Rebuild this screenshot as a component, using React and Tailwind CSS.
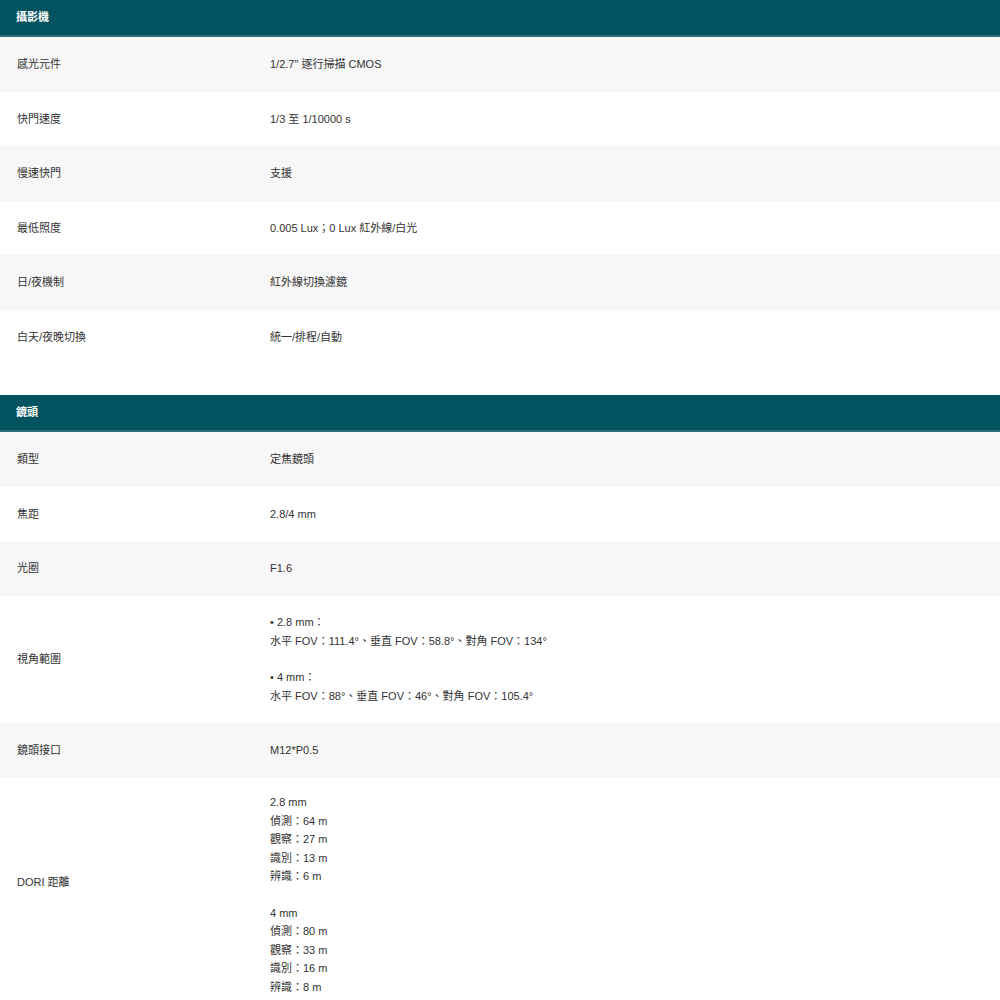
export default function App() {
  const font = { fontFamily: '"Liberation Sans", "Noto Sans CJK TC", sans-serif' };
  const Header = ({ t }) => (
    <div className="h-[37px] bg-[#03525f] flex items-center px-[16px] text-white font-bold text-[11px] border-b-2 border-[#2d6d78]">{t}</div>
  );
  const Row = ({ l, children, gray, h = 'h-[54.5px]' }) => (
    <div className={`flex items-center ${h} ${gray ? 'bg-[#f7f7f7]' : 'bg-white'}`}>
      <div className="w-[270px] pl-[17px] shrink-0">{l}</div>
      <div className="flex-1">{children}</div>
    </div>
  );
  return (
    <div style={font} className="w-[1000px] h-[1000px] overflow-hidden bg-white text-[11px] text-[#333] leading-[18.5px]">
      <Header t="攝影機" />
      <Row gray l="感光元件">1/2.7" 逐行掃描 CMOS</Row>
      <Row l="快門速度">1/3 至 1/10000 s</Row>
      <Row gray l="慢速快門">支援</Row>
      <Row l="最低照度">0.005 Lux；0 Lux 紅外線/白光</Row>
      <Row gray l="日/夜機制">紅外線切換濾鏡</Row>
      <Row l="白天/夜晚切換">統一/排程/自動</Row>
      <div className="h-[31px]" />
      <Header t="鏡頭" />
      <Row gray l="類型">定焦鏡頭</Row>
      <Row l="焦距">2.8/4 mm</Row>
      <Row gray l="光圈">F1.6</Row>
      <Row l="視角範圍" h="h-[127px]">
        <div>• 2.8 mm：</div>
        <div>水平 FOV：111.4°、垂直 FOV：58.8°、對角 FOV：134°</div>
        <div className="mt-[18px]">• 4 mm：</div>
        <div>水平 FOV：88°、垂直 FOV：46°、對角 FOV：105.4°</div>
      </Row>
      <Row gray l="鏡頭接口">M12*P0.5</Row>
      <div className="flex bg-white pt-[16px]">
        <div className="w-[270px] pl-[17px] shrink-0 self-center pb-[25px]">DORI 距離</div>
        <div className="flex-1">
          <div>2.8 mm</div>
          <div>偵測：64 m</div>
          <div>觀察：27 m</div>
          <div>識別：13 m</div>
          <div>辨識：6 m</div>
          <div className="mt-[18px]">4 mm</div>
          <div>偵測：80 m</div>
          <div>觀察：33 m</div>
          <div>識別：16 m</div>
          <div>辨識：8 m</div>
        </div>
      </div>
    </div>
  );
}
